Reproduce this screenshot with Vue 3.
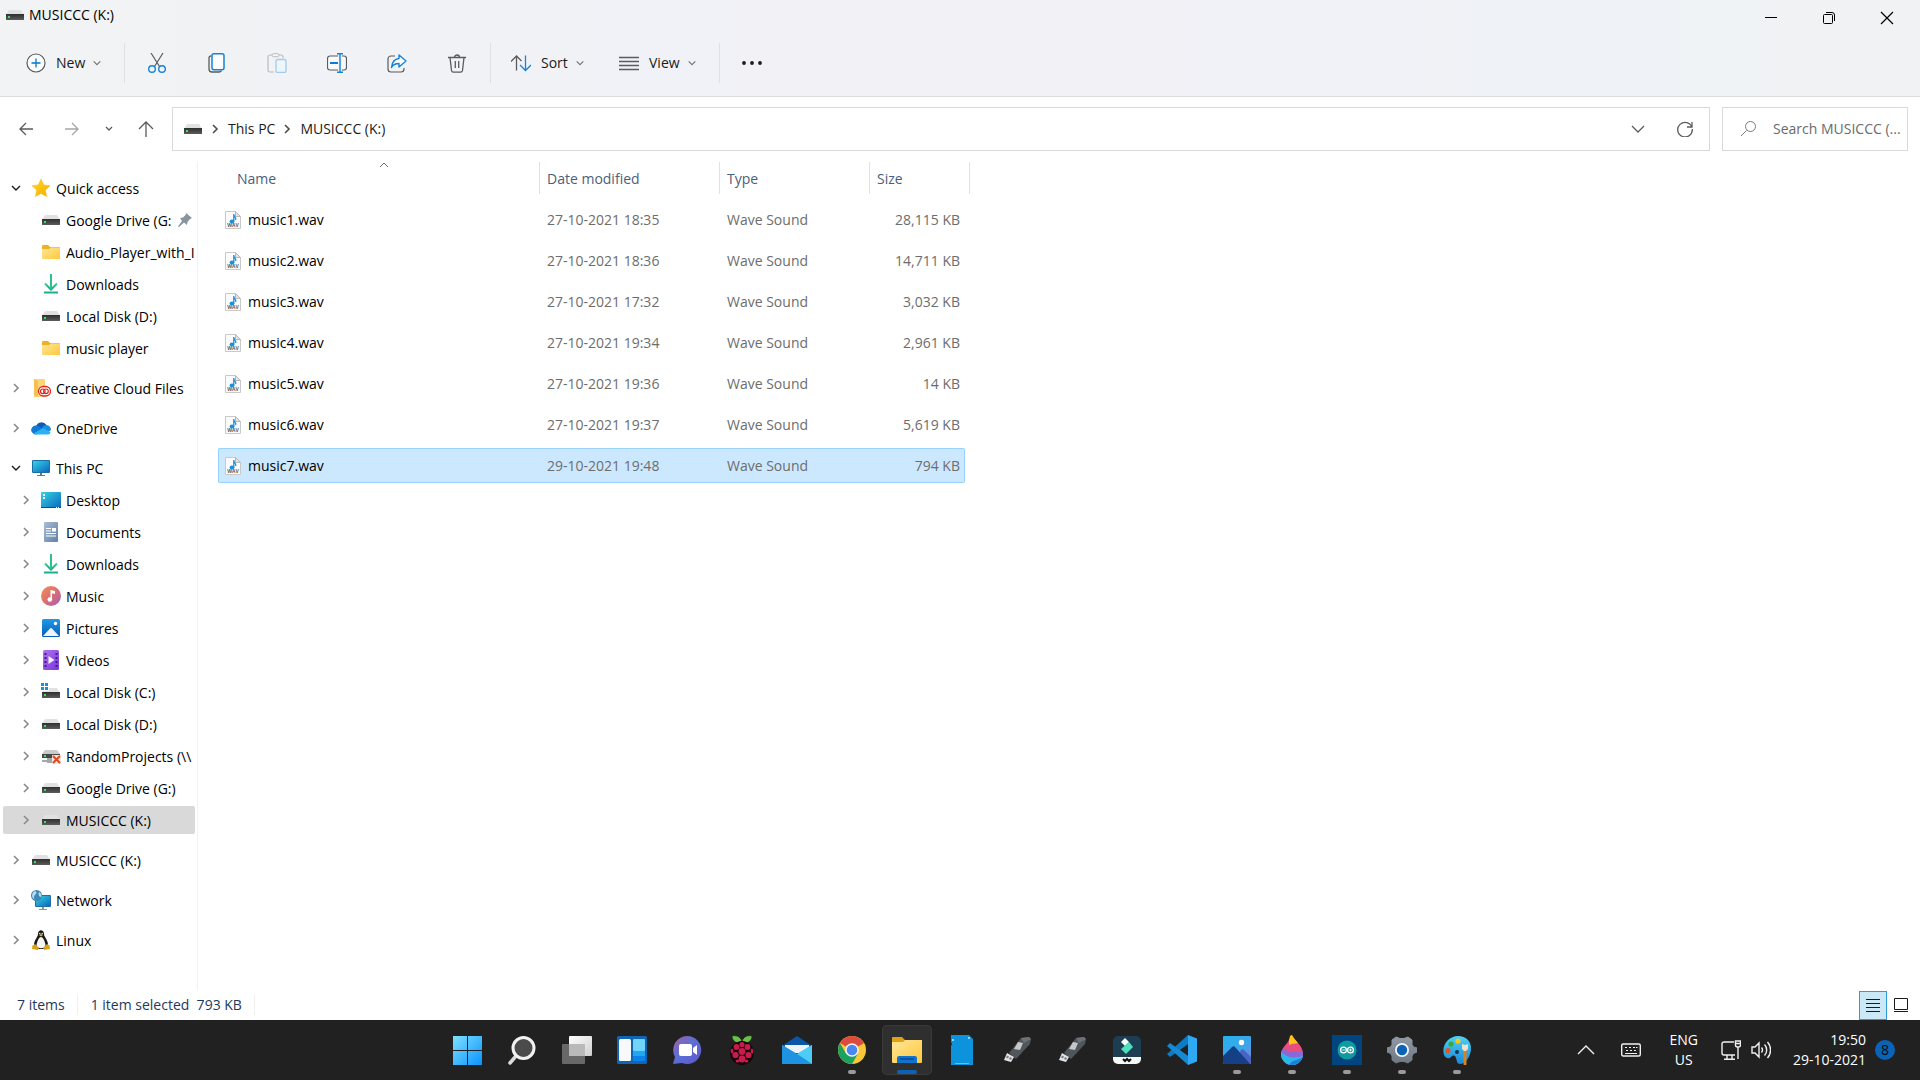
<template>
  <div class="desktop">
    <!-- shared icon shapes -->
    <svg class="sprite" aria-hidden="true">
      <defs>
        <linearGradient id="g-drive" x1="0" y1="0" x2="0" y2="1">
          <stop offset="0" stop-color="#2f2f2f" />
          <stop offset="1" stop-color="#5c5c5c" />
        </linearGradient>
        <linearGradient id="g-star" x1="0" y1="0" x2="1" y2="1">
          <stop offset="0" stop-color="#ffdc1c" />
          <stop offset="1" stop-color="#f9a806" />
        </linearGradient>
        <linearGradient id="g-folder" x1="0" y1="0" x2="1" y2="1">
          <stop offset="0" stop-color="#ffe69b" />
          <stop offset="1" stop-color="#ffc83a" />
        </linearGradient>
        <linearGradient id="g-down" x1="0" y1="0" x2="0" y2="1">
          <stop offset="0" stop-color="#3ccf8e" />
          <stop offset="1" stop-color="#12a594" />
        </linearGradient>
        <linearGradient id="g-screen" x1="0" y1="0" x2="1" y2="1">
          <stop offset="0" stop-color="#35d3e3" />
          <stop offset="1" stop-color="#0c67bd" />
        </linearGradient>
        <linearGradient id="g-doc" x1="0" y1="0" x2="1" y2="1">
          <stop offset="0" stop-color="#a9bdd6" />
          <stop offset="1" stop-color="#6181a5" />
        </linearGradient>
        <linearGradient id="g-music" x1="0" y1="0" x2="1" y2="1">
          <stop offset="0" stop-color="#f39052" />
          <stop offset="0.5" stop-color="#d97071" />
          <stop offset="1" stop-color="#a75ac0" />
        </linearGradient>
        <linearGradient id="g-pic" x1="0" y1="0" x2="0" y2="1">
          <stop offset="0" stop-color="#1d9be8" />
          <stop offset="1" stop-color="#0a5cb5" />
        </linearGradient>
        <linearGradient id="g-video" x1="0" y1="0" x2="1" y2="1">
          <stop offset="0" stop-color="#b072ee" />
          <stop offset="1" stop-color="#7b35dc" />
        </linearGradient>
        <linearGradient id="g-win" x1="0" y1="0" x2="1" y2="1">
          <stop offset="0" stop-color="#7fe0ff" />
          <stop offset="1" stop-color="#0a93fb" />
        </linearGradient>
        <linearGradient id="g-chat" x1="0" y1="0" x2="1" y2="1">
          <stop offset="0" stop-color="#a45f9f" />
          <stop offset="0.45" stop-color="#5d6fd6" />
          <stop offset="1" stop-color="#5b55cc" />
        </linearGradient>
        <linearGradient id="g-task" x1="0" y1="0" x2="1" y2="1">
          <stop offset="0" stop-color="#ffffff" />
          <stop offset="1" stop-color="#cfcfcf" />
        </linearGradient>
        <linearGradient id="g-photo" x1="0" y1="0" x2="1" y2="1">
          <stop offset="0" stop-color="#27b1ee" />
          <stop offset="0.6" stop-color="#3fa5ea" />
          <stop offset="1" stop-color="#8b75cf" />
        </linearGradient>
        <linearGradient id="g-gear" x1="0" y1="0" x2="0" y2="1">
          <stop offset="0" stop-color="#8f9aa6" />
          <stop offset="1" stop-color="#6f7881" />
        </linearGradient>
        <linearGradient id="g-palette" x1="0" y1="0" x2="0" y2="1">
          <stop offset="0" stop-color="#4bd3f5" />
          <stop offset="1" stop-color="#1b86d8" />
        </linearGradient>
        <clipPath id="c-drop">
          <path d="M15 0c1 4 11 10 11 19a11 11 0 0 1-22 0C4 12 13 8 13 1z" />
        </clipPath>
        <clipPath id="c-photo"><rect x="1" y="1" width="28" height="28" rx="1" /></clipPath>
      </defs>

      <symbol id="drive" viewBox="0 0 20 20">
        <path d="M4 5h12l3 5H1z" fill="#dfe1e3" />
        <rect x="1" y="9" width="18" height="6" fill="url(#g-drive)" />
        <rect x="3" y="11" width="2" height="2" fill="#36e35c" />
      </symbol>
      <symbol id="drive-c" viewBox="0 0 20 20">
        <path d="M4 6h12l3 5H1z" fill="#dfe1e3" />
        <rect x="1" y="10" width="18" height="6" fill="url(#g-drive)" />
        <rect x="3" y="12" width="2" height="2" fill="#36e35c" />
        <rect x="0" y="1" width="8" height="8" fill="#fff" />
        <path d="M0 1h3v3H0zM4 1h3v3H4zM0 5h3v3H0zM4 5h3v3H4z" fill="#1b8fdd" />
      </symbol>
      <symbol id="drive-net" viewBox="0 0 20 20">
        <path d="M4 4h12l3 4H1z" fill="#c9cbcd" />
        <rect x="1" y="8" width="18" height="4" fill="#484848" />
        <rect x="3" y="9" width="2" height="2" fill="#36e35c" />
        <path d="M1 14h12v2H1zM6 12h5v5H6z" fill="#a4a8ab" />
        <rect x="11" y="9" width="9" height="9" fill="#e6e6e6" />
        <path d="M12 10l7 7M19 10l-7 7" stroke="#dd4a1c" stroke-width="2" />
      </symbol>
      <symbol id="star" viewBox="0 0 20 20">
        <path d="M10 1l2.700 5.900 6.300.8-4.600 4.400 1.200 6.400L10 15.400l-5.600 3.100 1.200-6.400L1 7.700l6.300-.8z" fill="url(#g-star)" stroke="#f6b60c" stroke-width=".5" />
      </symbol>
      <symbol id="folder" viewBox="0 0 20 20">
        <path d="M1 4a1 1 0 0 1 1-1h5l2 2h9a1 1 0 0 1 1 1v3H1z" fill="#eeb025" />
        <path d="M1 7h7l2-1.500h9V16a1 1 0 0 1-1 1H2a1 1 0 0 1-1-1z" fill="url(#g-folder)" />
      </symbol>
      <symbol id="download" viewBox="0 0 20 20">
        <path d="M4 9.500l6 6 6-6" fill="none" stroke="url(#g-down)" stroke-width="2" />
        <rect x="9" y="0" width="2" height="15" fill="#2fc08f" />
        <rect x="3" y="17.500" width="14" height="2" fill="#1fae90" />
      </symbol>
      <symbol id="cloud-files" viewBox="0 0 20 20">
        <path d="M3 1h10a1 1 0 0 1 1 1v16l-4 1H3z" fill="#fbd675" />
        <path d="M3 1l4 2v16l-4-2z" fill="#f5c04f" />
        <rect x="7" y="8" width="13" height="11" rx="5" fill="#fff" />
        <rect x="7.500" y="8.500" width="12" height="9.500" rx="4.700" fill="none" stroke="#e2231a" stroke-width="1.300" />
        <circle cx="11.800" cy="13.300" r="2.300" fill="none" stroke="#e2231a" stroke-width="1.200" />
        <circle cx="15" cy="13.300" r="2.300" fill="none" stroke="#e2231a" stroke-width="1.200" />
      </symbol>
      <symbol id="onedrive" viewBox="0 0 20 20">
        <path d="M5 8a6 6 0 0 1 10.500-1l-4 5L1 14A4 4 0 0 1 5 8z" fill="#0f5cb4" />
        <path d="M5 7.500a4.500 4.500 0 0 1 3 1l8 4.500-11 3.500A4.500 4.500 0 0 1 5 7.500z" fill="#1279d4" />
        <path d="M11 10a5 5 0 0 1 4.500-3A4.800 4.800 0 0 1 20 12l-4 3z" fill="#1b8fe3" />
        <path d="M2.500 15.500L12 10l7.500 4.200a2.500 2.500 0 0 1-2.500 2.300H5a4 4 0 0 1-2.500-1z" fill="#2bb0f2" />
      </symbol>
      <symbol id="pc" viewBox="0 0 20 20">
        <rect x="1" y="2" width="18" height="13" rx="1" fill="#1b6da5" />
        <rect x="2" y="3" width="16" height="11" fill="url(#g-screen)" />
        <path d="M9 15h2v2h3v1H6v-1h3z" fill="#6b7681" />
      </symbol>
      <symbol id="desktop-icon" viewBox="0 0 20 20">
        <rect y="2" width="20" height="16" rx="1" fill="url(#g-screen)" />
        <path d="M2 4h2v2H2zM2 7h2v2H2z" fill="#fff" />
        <rect y="17" width="20" height="1" fill="#0b4f8f" />
        <path d="M15 17h1v1h-1zM17 17h1v1h-1z" fill="#fff" />
      </symbol>
      <symbol id="document" viewBox="0 0 20 20">
        <rect x="3" y="0" width="14" height="20" rx="1" fill="url(#g-doc)" />
        <path d="M5 6h5v1H5zM5 8.500h5v1H5zM5 11h10v1H5zM5 13.500h10v1H5zM11 6h4v3.500h-4z" fill="#fff" />
      </symbol>
      <symbol id="music" viewBox="0 0 20 20">
        <circle cx="10" cy="10" r="10" fill="url(#g-music)" />
        <circle cx="8.800" cy="13.500" r="2.300" fill="#fff" />
        <path d="M9.500 4l4.500 1v3l-3-.7v6H9.500z" fill="#fff" />
      </symbol>
      <symbol id="pictures" viewBox="0 0 20 20">
        <rect x="1" y="1" width="18" height="18" rx="1.500" fill="url(#g-pic)" />
        <circle cx="14.500" cy="5.500" r="1.700" fill="#fff" />
        <path d="M2 18l7-7.500a1.500 1.500 0 0 1 2 0L18 18z" fill="#edf4fb" />
      </symbol>
      <symbol id="videos" viewBox="0 0 20 20">
        <rect x="2" y="0" width="16" height="20" rx="1.500" fill="url(#g-video)" />
        <path d="M3.500 3h2v2h-2zM3.500 7h2v2h-2zM3.500 11h2v2h-2zM3.500 15h2v2h-2zM14.500 3h2v2h-2zM14.500 7h2v2h-2zM14.500 11h2v2h-2zM14.500 15h2v2h-2z" fill="#3f1f87" />
        <path d="M7.500 6l6 4-6 4z" fill="#f4edfb" />
      </symbol>
      <symbol id="network" viewBox="0 0 20 20">
        <rect x="4" y="5" width="16" height="12" rx="1" fill="#1f6fa8" />
        <rect x="5" y="6" width="14" height="10" fill="url(#g-screen)" />
        <path d="M11 17h2v2h3v1H8v-1h3z" fill="#8b959d" />
        <circle cx="5.500" cy="5.500" r="5.500" fill="#3d88b6" />
        <path d="M3 1.500c3-1 3 2 1 3.500s0 4-1 4C0 7 1 3 3 1.500zM8 2c2 1 3 3 2 5-2 0-3-3-2-5z" fill="#b9dcea" />
      </symbol>
      <symbol id="linux" viewBox="0 0 20 20">
        <path d="M7 4c0-5 6-5 6 0 0 3 4 6 4 11l-3 4H6l-3-4c0-5 4-8 4-11z" fill="#191919" />
        <path d="M10 7c2 0 4.500 5 4.500 9 0 3-9 3-9 0 0-4 2.500-9 4.500-9z" fill="#f5f5f5" />
        <path d="M8 5l2-1 2 1-2 1.500z" fill="#e9b02c" />
        <circle cx="8.800" cy="3.500" r=".7" fill="#fff" />
        <circle cx="11.200" cy="3.500" r=".7" fill="#fff" />
        <path d="M1.500 15.500L4 14l4 4-1 2-6-1zM18.500 15.500L16 14l-4 4 1 2 6-1z" fill="#d9a113" />
      </symbol>
      <symbol id="pin" viewBox="0 0 14 14">
        <path d="M8 0l6 5-2 1-2.500 3-.5 3-3-2.500L1 14l-1-.5L4 8 2 5l3-.5 2.500-2.500z" fill="#8795a1" />
      </symbol>
      <symbol id="wav" viewBox="0 0 16 18">
        <path d="M.5.500h10l5 5v12H.5z" fill="#fbfbfb" stroke="#c9c9c9" />
        <path d="M10.500.500v5h5z" fill="#e2e2e2" stroke="#b9b9b9" />
        <ellipse cx="7" cy="10.500" rx="2.400" ry="2" fill="#1f8fd8" />
        <path d="M8.800 3v7.500M9 4c0 2 2.500 2 1.700 5" fill="none" stroke="#1f8fd8" stroke-width="1.300" />
      </symbol>

      <!-- toolbar -->
      <symbol id="t-plus" viewBox="0 0 20 20">
        <circle cx="10" cy="10" r="9" fill="#fbfbfc" stroke="#5b5b5b" stroke-width="1.200" />
        <path d="M10 5.500v9M5.500 10h9" stroke="#0078d4" stroke-width="1.300" />
      </symbol>
      <symbol id="t-cut" viewBox="0 0 20 20">
        <path d="M4 0l8.500 13.500M16 0L7.500 13.500" fill="none" stroke="#5b5b5b" stroke-width="1.200" />
        <circle cx="5" cy="16" r="3.300" fill="none" stroke="#1583da" stroke-width="1.400" />
        <circle cx="15" cy="16" r="3.300" fill="none" stroke="#1583da" stroke-width="1.400" />
      </symbol>
      <symbol id="t-copy" viewBox="0 0 20 20">
        <path d="M4 3c-1.500 0-2 1-2 2v11a3 3 0 0 0 3 3h7c1.500 0 2-.5 2.500-1.500" fill="none" stroke="#5b5b5b" stroke-width="1.300" />
        <rect x="5" y=".8" width="12" height="16" rx="2" fill="#fdfdfd" stroke="#1583da" stroke-width="1.500" />
      </symbol>
      <symbol id="t-paste" viewBox="0 0 20 20">
        <path d="M7 19H3a2 2 0 0 1-2-2V4a2 2 0 0 1 2-2h2M12 2h2a2 2 0 0 1 2 2v1" fill="none" stroke="#b9bbbd" stroke-width="1.200" />
        <rect x="5" y=".7" width="7" height="3" rx="1.500" fill="#f4f5f6" stroke="#b9bbbd" />
        <rect x="9" y="6.500" width="10" height="13" rx="1.500" fill="#eef5fb" stroke="#9fccf0" stroke-width="1.300" />
      </symbol>
      <symbol id="t-rename" viewBox="0 0 20 20">
        <path d="M11 3H3a2.500 2.500 0 0 0-2.500 2.500v9A2.500 2.500 0 0 0 3 17h8M15 3h2a2.500 2.500 0 0 1 2.500 2.500v9A2.500 2.500 0 0 1 17 17h-2" fill="#fafafb" stroke="#5b5b5b" stroke-width="1.200" />
        <path d="M3 10h8" stroke="#0f7bd6" stroke-width="2" />
        <path d="M13 1v18M10 .7h6M10 19.300h6" stroke="#1583da" stroke-width="1.400" />
      </symbol>
      <symbol id="t-share" viewBox="0 0 20 20">
        <path d="M8 3H4a3 3 0 0 0-3 3v10a3 3 0 0 0 3 3h10a3 3 0 0 0 3-3v-1" fill="none" stroke="#5b5b5b" stroke-width="1.200" />
        <path d="M12 2l7 6-7 6v-3.500c-4 0-6 1-7.500 4C5 9 7.500 6 12 5.500z" fill="#fdfdfd" stroke="#1583da" stroke-width="1.400" stroke-linejoin="round" />
      </symbol>
      <symbol id="t-delete" viewBox="0 0 20 20">
        <path d="M1 4.500h18M7.500 4.500a2.500 2.500 0 0 1 5 0M3 4.500l1.500 13a2 2 0 0 0 2 1.700h7a2 2 0 0 0 2-1.700l1.500-13M8.300 8v7M11.700 8v7" fill="none" stroke="#5b5b5b" stroke-width="1.300" />
      </symbol>
      <symbol id="t-sort" viewBox="0 0 20 20">
        <path d="M5.500 17.500V3M0 8.500L5.500 3l5 5" fill="none" stroke="#5b5b5b" stroke-width="1.300" />
        <path d="M14.500 2.500V17M9 12l5.500 5.500L20 12" fill="none" stroke="#1583da" stroke-width="1.300" />
      </symbol>
      <symbol id="t-view" viewBox="0 0 20 20">
        <path d="M0 4.500h20M0 8.500h20M0 12.500h20M0 16.500h20" stroke="#5b5b5b" stroke-width="1.300" />
      </symbol>
      <symbol id="t-more" viewBox="0 0 20 20">
        <circle cx="2" cy="10" r="1.900" fill="#1b1b1b" />
        <circle cx="10" cy="10" r="1.900" fill="#1b1b1b" />
        <circle cx="18" cy="10" r="1.900" fill="#1b1b1b" />
      </symbol>
      <symbol id="chevron-down" viewBox="0 0 12 12">
        <path d="M2 4l4 4 4-4" fill="none" stroke="currentColor" stroke-width="1.400" />
      </symbol>
      <symbol id="chevron-right" viewBox="0 0 12 12">
        <path d="M4 2l4 4-4 4" fill="none" stroke="currentColor" stroke-width="1.600" />
      </symbol>

      <!-- taskbar -->
      <symbol id="b-start" viewBox="0 0 30 30">
        <path d="M1 1h14v14H1zM16 1h14v14H16zM1 16h14v14H1zM16 16h14v14H16z" fill="url(#g-win)" />
      </symbol>
      <symbol id="b-search" viewBox="0 0 30 30">
        <path d="M9 21l-6 7" stroke="#dcdcdc" stroke-width="3.500" stroke-linecap="round" />
        <circle cx="16.500" cy="13" r="10.500" fill="#4b4b4b" stroke="#f0f2f3" stroke-width="3" />
      </symbol>
      <symbol id="b-tasks" viewBox="0 0 30 30">
        <rect x="0" y="9" width="23" height="20" rx="1" fill="#686868" />
        <rect x="7" y="1" width="23" height="20" rx="1" fill="url(#g-task)" />
        <rect x="7" y="9" width="16" height="12" fill="#b9b9b9" />
      </symbol>
      <symbol id="b-widgets" viewBox="0 0 30 30">
        <rect y="1" width="30" height="28" rx="1.500" fill="#0f64b4" />
        <rect x="2" y="4" width="12" height="22" rx="1.500" fill="#f7f9fb" />
        <rect x="16" y="4" width="12" height="12" rx="1" fill="#70d5fb" />
        <rect x="16" y="16" width="12" height="5" fill="#21a7f2" />
        <rect x="16" y="21" width="12" height="5" fill="#0a84ec" />
      </symbol>
      <symbol id="b-chat" viewBox="0 0 30 30">
        <path d="M15 1a14 14 0 1 1-5 27l-9 1 2-7A14 14 0 0 1 15 1z" fill="url(#g-chat)" />
        <rect x="7" y="9" width="13" height="12" rx="2" fill="#fff" />
        <path d="M21 13l4-3v10l-4-3z" fill="#fff" />
      </symbol>
      <symbol id="b-pi" viewBox="0 0 30 30">
        <path d="M15 6c-2-5-6-6-10-5 0 4 3 7 7 7zM15 6c2-5 6-6 10-5 0 4-3 7-7 7z" fill="#6cc04a" stroke="#18330f" stroke-width=".8" />
        <path d="M15 6c6 0 12 5 12 12s-6 12-12 12S3 25 3 18 9 6 15 6z" fill="#120609" />
        <g fill="#cb1b4c">
          <circle cx="15" cy="16.500" r="3.400" />
          <circle cx="15" cy="24" r="3.400" />
          <circle cx="15" cy="9.500" r="2.600" />
          <circle cx="8.500" cy="20" r="3.100" />
          <circle cx="21.500" cy="20" r="3.100" />
          <circle cx="9.500" cy="12" r="2.900" />
          <circle cx="20.500" cy="12" r="2.900" />
          <ellipse cx="5" cy="16" rx="1.300" ry="2.600" />
          <ellipse cx="25" cy="16" rx="1.300" ry="2.600" />
          <ellipse cx="10.500" cy="26" rx="1.900" ry="1.500" />
          <ellipse cx="19.500" cy="26" rx="1.900" ry="1.500" />
        </g>
      </symbol>
      <symbol id="b-mail" viewBox="0 0 30 30">
        <path d="M0 11L15 1l15 10z" fill="#0c56a8" />
        <path d="M3 10h24v8H3z" fill="#eef2f5" />
        <path d="M0 10l15 9 15-9v19H0z" fill="#35b7f1" />
        <path d="M30 10L15 19l15 10z" fill="#4ccdf6" />
        <path d="M0 10l15 9 15 10H0z" fill="#1d93e2" />
      </symbol>
      <symbol id="b-chrome" viewBox="0 0 30 30">
        <circle cx="15" cy="15" r="14" fill="#f9c838" />
        <path d="M15 15L2.900 8A14 14 0 0 1 27.100 8z" fill="#dd4b3e" />
        <path d="M2.900 8A14 14 0 0 0 15 29l6-10.500-6-3.500-6 3.500z" fill="#1da15f" />
        <circle cx="15" cy="15" r="6.800" fill="#f4f4f4" />
        <circle cx="15" cy="15" r="5.300" fill="#4b87f0" />
      </symbol>
      <symbol id="b-explorer" viewBox="0 0 30 30">
        <path d="M0 3a1 1 0 0 1 1-1h9l3 3h16a1 1 0 0 1 1 1v4H0z" fill="#e0a212" />
        <path d="M0 7h11l2-2h17v22a1 1 0 0 1-1 1H1a1 1 0 0 1-1-1z" fill="url(#g-folder)" />
        <path d="M5 28v-5a2 2 0 0 1 2-2h16a2 2 0 0 1 2 2v5z" fill="#1273cf" />
        <path d="M8 24h14" stroke="#0a4a92" stroke-width="1.500" />
      </symbol>
      <symbol id="b-sd" viewBox="0 0 30 30">
        <path d="M4 0h18l4 4v26H4V11l1-2-1-2z" fill="#0c93dc" />
        <path d="M8 28h14v1H8z" fill="#65bfee" />
        <path d="M5 4h2v2H5zM21 2h2v2h-2z" fill="#9ad6f4" />
      </symbol>
      <symbol id="b-usb" viewBox="0 0 30 30">
        <path d="M19 3l8-1 2 2-1 5-14 15-7-6z" fill="#51565b" />
        <path d="M19 3l8-1 2 2-7 4z" fill="#6c7277" />
        <path d="M16 7l5 1-3 7-6-1z" fill="#c5c8ca" />
        <path d="M5 18l7 4-3 5-7-2z" fill="#e2e3e4" />
        <path d="M5 20.500l2 1-1 2-2-1zM8 22l2 1-1 2-2-1z" fill="#7c8083" />
      </symbol>
      <symbol id="b-filmora" viewBox="0 0 30 30">
        <rect x="1" y="1" width="28" height="28" rx="5" fill="#1c3d52" />
        <path d="M1 22h28v2a5 5 0 0 1-5 5H6a5 5 0 0 1-5-5z" fill="#f8f8f8" />
        <path d="M13 3l4 4-4 4-4-4z" fill="#fff" />
        <path d="M17 7l4 5-7 7-5-5z" fill="#4fe0bd" />
        <path d="M11 24l2 2 2-2 2 2 2-2" fill="none" stroke="#111" stroke-width="2" />
      </symbol>
      <symbol id="b-code" viewBox="0 0 30 30">
        <path d="M21 0L0 19l3 3L24 7z" fill="#0c7cc4" />
        <path d="M21 30L0 11l3-3 21 15z" fill="#1789d2" />
        <path d="M21 0l9 3.500v23L21 30z" fill="#2fa9f4" />
      </symbol>
      <symbol id="b-photos" viewBox="0 0 30 30">
        <g clip-path="url(#c-photo)">
          <rect x="1" y="1" width="28" height="28" fill="url(#g-photo)" />
          <path d="M12 29l7-14a2 2 0 0 1 3 0l9 9v6z" fill="#4a64c4" />
          <path d="M-2 24l12-12a2 2 0 0 1 3 0l16 18H-2z" fill="#153f86" />
          <circle cx="19.500" cy="7.500" r="2.700" fill="#fff" />
        </g>
      </symbol>
      <symbol id="b-paint3d" viewBox="0 0 30 30">
        <g clip-path="url(#c-drop)">
          <rect width="30" height="30" fill="#e84f7f" />
          <path d="M0 18c8-8 12 3 30-3v15H0z" fill="#8c68d6" />
          <path d="M0 16c7 0 8 10 26 5v9H0z" fill="#29b8ec" />
          <path d="M12 10c4-2 6-1 9-2L15-1h-3z" fill="#fdc614" />
          <path d="M12 30c4-6 8-4 14-8v8z" fill="#1e7fd8" />
        </g>
      </symbol>
      <symbol id="b-arduino" viewBox="0 0 30 30">
        <rect width="30" height="30" fill="#00457f" />
        <circle cx="15" cy="15" r="9.500" fill="#0f9ba0" />
        <circle cx="11.500" cy="15" r="2.900" fill="none" stroke="#fff" stroke-width="1.300" />
        <circle cx="18.500" cy="15" r="2.900" fill="none" stroke="#fff" stroke-width="1.300" />
        <path d="M10 15h3M17 15h3M18.500 13.500v3" stroke="#fff" stroke-width=".8" />
      </symbol>
      <symbol id="b-settings" viewBox="0 0 30 30">
        <path d="M9 2l4 1.500h4L21 2l4 3v4.500l1.500 2.500 3.500 1v4l-3.500 1.500-1.500 2.500V25l-4 3-4-1.500h-4L9 28l-4-3v-4L3.500 18.500 0 17v-4l3.500-1L5 9.500V5z" fill="url(#g-gear)" stroke="url(#g-gear)" stroke-linejoin="round" />
        <circle cx="15" cy="15" r="7" fill="#f4f6f8" />
        <circle cx="15" cy="15" r="5.200" fill="#0e62b6" />
      </symbol>
      <symbol id="b-paint" viewBox="0 0 30 30">
        <path d="M16 1c8 0 13 5 13 12 0 9-6 16-11 16-3 0-3-3-4-6s-3-3-5-1-5 2-7-2C-1 10 7 1 16 1z" fill="url(#g-palette)" />
        <circle cx="16" cy="6" r="2.600" fill="#f8c51c" />
        <circle cx="9" cy="9" r="2.600" fill="#3ba93a" />
        <circle cx="6" cy="15.500" r="2.600" fill="#e05a20" />
        <circle cx="15" cy="17" r="2" fill="#16344e" />
        <path d="M21.500 15h3v14a1.500 1.500 0 0 1-3 0z" fill="#d9821f" />
        <path d="M20 9l3 1 3-1v5l-2 2h-2l-2-2z" fill="#f2dfc4" />
      </symbol>
    </svg>

    <!-- title bar + command bar -->
    <header class="window-head">
      <div class="title-bar">
        <h1 class="window-title">
          <svg class="icon-20"><use href="#drive" /></svg>
          MUSICCC (K:)
        </h1>
        <div class="window-buttons">
          <button aria-label="Minimize">
            <svg viewBox="0 0 14 14"><path d="M1 6.500h12" stroke="#000" /></svg>
          </button>
          <button aria-label="Restore">
            <svg viewBox="0 0 14 14">
              <rect x="1.500" y="3.500" width="9" height="9" rx="1" fill="none" stroke="#000" />
              <path d="M4 1.500h6a2.500 2.500 0 0 1 2.500 2.500v6" fill="none" stroke="#000" />
            </svg>
          </button>
          <button aria-label="Close">
            <svg viewBox="0 0 14 14"><path d="M1 1l12 12M13 1L1 13" stroke="#000" stroke-width="1.200" /></svg>
          </button>
        </div>
      </div>

      <div class="command-bar">
        <button class="command new">
          <svg class="icon-20"><use href="#t-plus" /></svg>
          <span>New</span>
          <svg class="icon-10"><use href="#chevron-down" /></svg>
        </button>
        <span class="divider"></span>
        <button
          v-for="tool in tools"
          :key="tool.icon"
          class="tool"
          :disabled="tool.disabled"
          :aria-label="tool.label"
        >
          <svg class="icon-20"><use :href="'#' + tool.icon" /></svg>
        </button>
        <span class="divider"></span>
        <button class="command">
          <svg class="icon-20"><use href="#t-sort" /></svg>
          <span>Sort</span>
          <svg class="icon-10"><use href="#chevron-down" /></svg>
        </button>
        <button class="command view">
          <svg class="icon-20"><use href="#t-view" /></svg>
          <span>View</span>
          <svg class="icon-10"><use href="#chevron-down" /></svg>
        </button>
        <span class="divider"></span>
        <button class="tool" aria-label="See more">
          <svg class="icon-20"><use href="#t-more" /></svg>
        </button>
      </div>
    </header>

    <!-- navigation row -->
    <div class="nav-row">
      <button class="nav-button" aria-label="Back">
        <svg viewBox="0 0 16 16"><path d="M15 8H2M8 2L2 8l6 6" /></svg>
      </button>
      <button class="nav-button" aria-label="Forward" disabled>
        <svg viewBox="0 0 16 16"><path d="M1 8h13M8 2l6 6-6 6" /></svg>
      </button>
      <button class="nav-button recent" aria-label="Recent locations">
        <svg viewBox="0 0 16 16"><path d="M5 6l3 3 3-3" /></svg>
      </button>
      <button class="nav-button" aria-label="Up">
        <svg viewBox="0 0 16 16"><path d="M8 16V1M1 8l7-7 7 7" /></svg>
      </button>

      <div class="address">
        <svg class="icon-20"><use href="#drive" /></svg>
        <svg class="icon-12 crumb-arrow"><use href="#chevron-right" /></svg>
        <a href="#">This PC</a>
        <svg class="icon-12 crumb-arrow"><use href="#chevron-right" /></svg>
        <a href="#">MUSICCC (K:)</a>
        <button class="address-button first" aria-label="Previous locations">
          <svg viewBox="0 0 16 16"><path d="M2 5l6 6 6-6" /></svg>
        </button>
        <button class="address-button" aria-label="Refresh">
          <svg viewBox="0 0 16 16"><path d="M15 6.500A7.300 7.300 0 1 0 15.300 8M15 1v5h-5" /></svg>
        </button>
      </div>

      <label class="search">
        <svg viewBox="0 0 16 16"><path d="M6.500 9.500L1 15" /><circle cx="10.500" cy="5.500" r="5" /></svg>
        <input type="text" placeholder="Search MUSICCC (..." aria-label="Search MUSICCC (K:)" />
      </label>
    </div>

    <div class="main">
      <!-- folder tree -->
      <nav class="sidebar">
        <ul v-for="(group, i) in tree" :key="i" class="group">
          <li v-for="item in group" :key="item.name">
            <button class="tree-item" :class="{ child: item.child, active: item.active }">
              <svg class="icon-12 arrow" :class="{ open: item.open }">
                <use v-if="item.open" href="#chevron-down" />
                <use v-else-if="!item.leaf" href="#chevron-right" />
              </svg>
              <svg class="icon-20"><use :href="'#' + item.icon" /></svg>
              <span class="tree-name">{{ item.name }}</span>
              <svg v-if="item.pinned" class="pin"><use href="#pin" /></svg>
            </button>
          </li>
        </ul>
      </nav>

      <!-- file list -->
      <div class="content">
        <table class="files">
          <colgroup>
            <col class="col-name" />
            <col class="col-date" />
            <col class="col-type" />
            <col class="col-size" />
          </colgroup>
          <thead>
            <tr>
              <th v-for="(column, i) in columns" :key="column">
                <div class="column-head">
                  {{ column }}
                  <svg v-if="i === 0" class="sort-mark" viewBox="0 0 10 6"><path d="M1 5l4-4 4 4" /></svg>
                </div>
              </th>
            </tr>
          </thead>
          <tbody>
            <tr
              v-for="file in files"
              :key="file.name"
              :class="{ selected: file.name === selected }"
              @click="selected = file.name"
            >
              <td>
                <div class="file-name">
                  <svg class="file-icon" viewBox="0 0 16 18">
                    <use href="#wav" />
                    <text x="8" y="16" text-anchor="middle">WAV</text>
                  </svg>
                  {{ file.name }}
                </div>
              </td>
              <td>{{ file.date }}</td>
              <td>Wave Sound</td>
              <td class="size">{{ file.size }} KB</td>
            </tr>
          </tbody>
        </table>
      </div>
    </div>

    <footer class="status-bar">
      <span class="status-part">{{ files.length }} items</span>
      <span class="status-part">1 item selected&nbsp; 793 KB</span>
      <div class="view-switch">
        <button class="on" aria-label="Details view">
          <svg viewBox="0 0 16 16"><path d="M1 2.500h14M1 6.500h14M1 10.500h14M1 14.500h14" /></svg>
        </button>
        <button aria-label="Large icons view">
          <svg viewBox="0 0 16 16"><path d="M1.500 1.500h13v11h-13zM1 14.500h14" /></svg>
        </button>
      </div>
    </footer>

    <!-- taskbar -->
    <div class="taskbar">
      <div class="apps">
        <button
          v-for="app in apps"
          :key="app.name"
          class="app"
          :class="{ running: app.running, current: app.current }"
          :aria-label="app.name"
        >
          <svg><use :href="'#' + app.icon" /></svg>
        </button>
      </div>
      <div class="tray">
        <button class="tray-more" aria-label="Show hidden icons">
          <svg width="18" height="18" viewBox="0 0 18 18"><path d="M1 13l8-8 8 8" /></svg>
        </button>
        <button class="tray-keyboard" aria-label="Touch keyboard">
          <svg width="20" height="20" viewBox="0 0 20 20">
            <rect x=".7" y="4" width="18.600" height="12" rx="1.500" />
            <path d="M4 7.500h2M8 7.500h2M12 7.500h2M15 7.500h1.500M5 10.500h2M9 10.500h2M13 10.500h2M4 13.500h12" stroke-width="1.200" />
          </svg>
        </button>
        <button class="language"><span>ENG</span><span>US</span></button>
        <button class="tray-status" aria-label="Network and volume">
          <svg width="20" height="20" viewBox="0 0 20 20">
            <path d="M13 2H3a2 2 0 0 0-2 2v9a2 2 0 0 0 2 2h11M6 15v4M11 15v4M3 19.200h11M14.500 1h5v4a2 2 0 0 1-2 2h-1a2 2 0 0 1-2-2zM17 7v12M14.500 3.500h5" />
          </svg>
          <svg width="20" height="20" viewBox="0 0 20 20">
            <path d="M1 7h3l4-4v14l-4-4H1zM10.500 7.500a4 4 0 0 1 0 5M13.500 4.500a8 8 0 0 1 0 11M16.500 2a12 12 0 0 1 0 16" />
          </svg>
        </button>
        <button class="clock"><span>19:50</span><span>29-10-2021</span></button>
        <span class="badge">8</span>
      </div>
    </div>
  </div>
</template>

<script setup>
import { ref } from 'vue';

const tools = [
  { icon: 't-cut', label: 'Cut' },
  { icon: 't-copy', label: 'Copy' },
  { icon: 't-paste', label: 'Paste', disabled: true },
  { icon: 't-rename', label: 'Rename' },
  { icon: 't-share', label: 'Share' },
  { icon: 't-delete', label: 'Delete' },
];

const tree = [
  [
    { name: 'Quick access', icon: 'star', open: true },
    { name: 'Google Drive (G:', icon: 'drive', child: true, leaf: true, pinned: true },
    { name: 'Audio_Player_with_I', icon: 'folder', child: true, leaf: true },
    { name: 'Downloads', icon: 'download', child: true, leaf: true },
    { name: 'Local Disk (D:)', icon: 'drive', child: true, leaf: true },
    { name: 'music player', icon: 'folder', child: true, leaf: true },
  ],
  [{ name: 'Creative Cloud Files', icon: 'cloud-files' }],
  [{ name: 'OneDrive', icon: 'onedrive' }],
  [
    { name: 'This PC', icon: 'pc', open: true },
    { name: 'Desktop', icon: 'desktop-icon', child: true },
    { name: 'Documents', icon: 'document', child: true },
    { name: 'Downloads', icon: 'download', child: true },
    { name: 'Music', icon: 'music', child: true },
    { name: 'Pictures', icon: 'pictures', child: true },
    { name: 'Videos', icon: 'videos', child: true },
    { name: 'Local Disk (C:)', icon: 'drive-c', child: true },
    { name: 'Local Disk (D:)', icon: 'drive', child: true },
    { name: 'RandomProjects (\\\\', icon: 'drive-net', child: true },
    { name: 'Google Drive (G:)', icon: 'drive', child: true },
    { name: 'MUSICCC (K:)', icon: 'drive', child: true, active: true },
  ],
  [{ name: 'MUSICCC (K:)', icon: 'drive' }],
  [{ name: 'Network', icon: 'network' }],
  [{ name: 'Linux', icon: 'linux' }],
];

const columns = ['Name', 'Date modified', 'Type', 'Size'];

const files = ref([
  { name: 'music1.wav', date: '27-10-2021 18:35', size: '28,115' },
  { name: 'music2.wav', date: '27-10-2021 18:36', size: '14,711' },
  { name: 'music3.wav', date: '27-10-2021 17:32', size: '3,032' },
  { name: 'music4.wav', date: '27-10-2021 19:34', size: '2,961' },
  { name: 'music5.wav', date: '27-10-2021 19:36', size: '14' },
  { name: 'music6.wav', date: '27-10-2021 19:37', size: '5,619' },
  { name: 'music7.wav', date: '29-10-2021 19:48', size: '794' },
]);

const selected = ref('music7.wav');

const apps = [
  { name: 'Start', icon: 'b-start' },
  { name: 'Search', icon: 'b-search' },
  { name: 'Task view', icon: 'b-tasks' },
  { name: 'Widgets', icon: 'b-widgets' },
  { name: 'Chat', icon: 'b-chat' },
  { name: 'Raspberry Pi Imager', icon: 'b-pi' },
  { name: 'Mail', icon: 'b-mail' },
  { name: 'Chrome', icon: 'b-chrome', running: true },
  { name: 'File Explorer', icon: 'b-explorer', current: true },
  { name: 'SD Card Formatter', icon: 'b-sd' },
  { name: 'USB tool', icon: 'b-usb' },
  { name: 'USB tool 2', icon: 'b-usb' },
  { name: 'Filmora', icon: 'b-filmora' },
  { name: 'Visual Studio Code', icon: 'b-code' },
  { name: 'Photos', icon: 'b-photos', running: true },
  { name: 'Paint 3D', icon: 'b-paint3d', running: true },
  { name: 'Arduino', icon: 'b-arduino', running: true },
  { name: 'Settings', icon: 'b-settings', running: true },
  { name: 'Paint', icon: 'b-paint', running: true },
];
</script>

<style>
body {
  background: #fff;
}
</style>

<style scoped>
.desktop {
  display: flex;
  flex-direction: column;
  min-height: 100vh;
  font-family: "Segoe UI", "Open Sans", "Noto Sans", sans-serif;
  font-size: 14px;
  line-height: 20px;
  color: #000;
  background: #fff;
}

.sprite {
  position: absolute;
  width: 0;
  height: 0;
}

button {
  display: flex;
  align-items: center;
  justify-content: center;
  padding: 0;
  border: none;
  background: none;
  font: inherit;
  color: inherit;
}

svg {
  flex: none;
}

.icon-20 {
  width: 20px;
  height: 20px;
}

.icon-12 {
  width: 12px;
  height: 12px;
}

.icon-10 {
  width: 10px;
  height: 10px;
}

/* title bar */
.window-head {
  padding-bottom: 6px;
  border-bottom: 1px solid #dcdde0;
  background: linear-gradient(90deg, #f1f3f4 0%, #f0f2f6 30%, #f2f1f6 48%, #f0f2f6 75%, #eff3f6 88%, #f2f2f3 100%);
}

.title-bar {
  display: flex;
  justify-content: space-between;
  height: 36px;
  padding: 0 4px 0 5px;
}

.window-title {
  display: flex;
  align-items: center;
  gap: 4px;
  height: 30px;
  margin: 0;
  font-size: 14px;
  font-weight: 400;
}

.window-buttons {
  display: flex;
}

.window-buttons button {
  width: 58px;
}

.window-buttons svg {
  width: 14px;
  height: 14px;
}

/* command bar */
.command-bar {
  display: flex;
  align-items: center;
  height: 54px;
}

.command {
  justify-content: flex-start;
  gap: 10px;
  width: 108px;
  height: 40px;
  padding-left: 20px;
  color: #1b1b1b;
}

.command.new {
  width: 124px;
  padding-left: 26px;
}

.command.view {
  width: 120px;
}

.command .icon-10 {
  margin-left: -3px;
  color: #767676;
}

.divider {
  width: 1px;
  height: 40px;
  background: #dfe0e3;
}

.tool {
  width: 60px;
  height: 40px;
}

.divider + .tool {
  margin-left: 2px;
}

.tool + .divider {
  margin-left: 3px;
}

/* navigation */
.nav-row {
  display: flex;
  align-items: center;
  padding: 10px 12px 0 3px;
}

.nav-button {
  width: 46px;
  height: 44px;
}

.nav-button.recent {
  width: 28px;
}

.nav-button svg,
.address-button svg,
.search svg {
  width: 16px;
  height: 16px;
  fill: none;
  stroke: #5b5b5b;
  stroke-width: 1.3;
}

.search svg {
  stroke: #7a7a7a;
  stroke-width: 1;
}

.nav-button:disabled svg {
  stroke: #a6a6a6;
}

.address {
  display: flex;
  flex: 1;
  align-items: center;
  box-sizing: border-box;
  height: 44px;
  margin: 0 12px 0 3px;
  padding: 0 1px 0 10px;
  border: 1px solid #d9d9d9;
}

.address a {
  color: #1b1b1b;
  text-decoration: none;
}

.crumb-arrow {
  margin: 0 7px 0 6px;
  color: #4c4c4c;
}

.address-button {
  width: 47px;
  height: 42px;
}

.address-button.first {
  margin-left: auto;
}

.search {
  display: flex;
  align-items: center;
  gap: 17px;
  box-sizing: border-box;
  width: 186px;
  height: 44px;
  padding-left: 17px;
  border: 1px solid #d9d9d9;
}

.search input {
  flex: 1;
  min-width: 0;
  padding: 0;
  border: none;
  outline: none;
  background: none;
  font: inherit;
}

.search input::placeholder {
  color: #6b6b6b;
  opacity: 1;
}

/* tree */
.main {
  display: flex;
  flex: 1;
}

.sidebar {
  box-sizing: border-box;
  width: 198px;
  margin-top: 11px;
  padding: 10px 2px 0 3px;
  border-right: 1px solid #f3f3f3;
}

.group {
  margin: 0 0 8px;
  padding: 0;
  list-style: none;
}

.tree-item {
  justify-content: flex-start;
  width: 100%;
  height: 28px;
  margin: 2px 0;
  padding-left: 7px;
  border-radius: 2px;
}

.group li {
  display: flex;
  height: 32px;
}

.tree-item.child {
  padding-left: 17px;
}

.tree-item.active {
  background: #d9d9d9;
}

.arrow {
  margin-right: 9px;
  color: #8a8a8a;
}

.arrow.open {
  color: #1b1b1b;
}

.tree-name {
  flex: 1;
  min-width: 0;
  margin-left: 5px;
  padding-top: 2px;
  overflow: hidden;
  text-align: left;
  white-space: nowrap;
}

.pin {
  width: 14px;
  height: 14px;
  margin-right: 3px;
}

/* file list */
.content {
  flex: 1;
  padding: 5px 20px 0;
}

.files {
  table-layout: fixed;
  width: 747px;
  border-collapse: separate;
  border-spacing: 0 6px;
}

.col-name {
  width: 322px;
}

.col-date {
  width: 180px;
}

.col-type {
  width: 150px;
}

.col-size {
  width: 95px;
}

.files th {
  height: 34px;
  padding: 0;
  font-weight: 400;
  text-align: left;
  vertical-align: top;
  color: #4c607a;
}

.column-head {
  position: relative;
  box-sizing: border-box;
  height: 32px;
  padding-left: 7px;
  border-right: 1px solid #e2e2e2;
  line-height: 33px;
}

.files th:first-child .column-head {
  padding-left: 19px;
}

.files th:last-child .column-head {
  margin-right: -5px;
}

.sort-mark {
  position: absolute;
  top: 0;
  left: 50%;
  width: 10px;
  height: 6px;
  fill: none;
  stroke: #6d6d6d;
}

.files td {
  box-sizing: border-box;
  height: 35px;
  padding: 0 0 0 7px;
  border: 1px solid transparent;
  border-width: 1px 0;
  color: #6d6d6d;
}

.files td:first-child {
  border-left-width: 1px;
  padding-left: 6px;
  border-radius: 2px 0 0 2px;
  color: #000;
}

.files td:last-child {
  padding-right: 4px;
  border-right-width: 1px;
  border-radius: 0 2px 2px 0;
  text-align: right;
}

.files .selected td {
  border-color: #99d1ff;
  background: #cce8ff;
}

.file-name {
  display: flex;
  align-items: center;
  gap: 7px;
}

.file-icon {
  width: 16px;
  height: 18px;
}

.file-icon text {
  font-size: 5px;
  font-weight: 700;
  fill: #5b5b5b;
}

/* status bar */
.status-bar {
  display: flex;
  align-items: center;
  height: 30px;
  padding: 0 8px 0 4px;
  color: #1e395b;
}

.status-part {
  padding: 0 12px 0 13px;
  border-right: 1px solid #f0f0f0;
}

.view-switch {
  display: flex;
  gap: 3px;
  margin-left: auto;
}

.view-switch button {
  box-sizing: border-box;
  width: 22px;
  height: 29px;
}

.view-switch button.on {
  width: 28px;
  border: 1px solid #2a9fdc;
  background: #cbe8f6;
}

.view-switch svg {
  width: 16px;
  height: 16px;
  fill: none;
  stroke: #1b1b1b;
}

/* taskbar */
.taskbar {
  display: grid;
  grid-template-columns: 1fr auto 1fr;
  align-items: center;
  height: 60px;
  padding-left: 3px;
  background: #212121;
  color: #fff;
}

.apps {
  display: flex;
  grid-column: 2;
  gap: 5px;
}

.app {
  position: relative;
  width: 50px;
  height: 50px;
  border-radius: 5px;
}

.app svg {
  width: 30px;
  height: 30px;
}

.app.current {
  background: #2f2f2f;
  box-shadow: inset 0 0 0 1px #3a3a3a;
}

.app.running::after,
.app.current::after {
  content: "";
  position: absolute;
  bottom: 1px;
  left: 50%;
  width: 8px;
  height: 4px;
  border-radius: 2px;
  background: #9a9a9a;
  transform: translateX(-50%);
}

.app.current::after {
  width: 20px;
  background: #0a63b5;
}

.tray {
  display: flex;
  align-items: center;
  justify-content: flex-end;
  padding-right: 25px;
}

.tray svg {
  fill: none;
  stroke: #f0f0f0;
  stroke-width: 1.4;
}

.tray-more {
  margin-right: 26px;
}

.tray-keyboard {
  margin-right: 29px;
}

.language,
.clock {
  flex-direction: column;
}

.language {
  margin-right: 23px;
}

.tray-status {
  gap: 10px;
}

.clock {
  align-items: flex-end;
  width: 95px;
  margin-right: 9px;
}

.badge {
  width: 20px;
  height: 20px;
  border-radius: 50%;
  background: #0a63b5;
  color: #0a0a0a;
  text-align: center;
}
</style>
